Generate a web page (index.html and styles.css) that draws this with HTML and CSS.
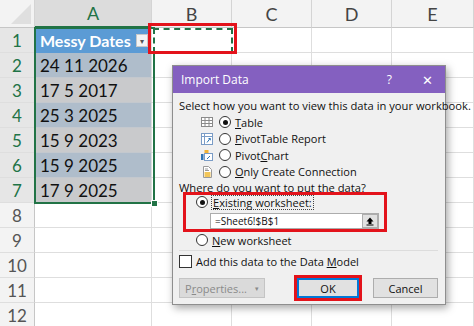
FILE: index.html
```html
<!DOCTYPE html>
<html lang="en">
<head>
    <meta charset="UTF-8">
    <meta name="viewport" content="width=device-width, initial-scale=1.0">
    <title>Import Data</title>
    <link rel="stylesheet" href="styles.css">
</head>
<body>
    <div class="sheet">
        <div class="grid">
            <div class="hd corner"></div>
            <div class="hd col active">A</div>
            <div class="hd col">B</div>
            <div class="hd col">C</div>
            <div class="hd col">D</div>
            <div class="hd col">E</div>

            <div class="rn active">1</div>
            <div class="cell th">Messy Dates<span class="dd">&#9662;</span></div>
            <div class="cell"></div><div class="cell"></div><div class="cell"></div><div class="cell"></div>

            <div class="rn active">2</div>
            <div class="cell band1">24 11 2026</div>
            <div class="cell"></div><div class="cell"></div><div class="cell"></div><div class="cell"></div>

            <div class="rn active">3</div>
            <div class="cell band2">17 5 2017</div>
            <div class="cell"></div><div class="cell"></div><div class="cell"></div><div class="cell"></div>

            <div class="rn active">4</div>
            <div class="cell band1">25 3 2025</div>
            <div class="cell"></div><div class="cell"></div><div class="cell"></div><div class="cell"></div>

            <div class="rn active">5</div>
            <div class="cell band2">15 9 2023</div>
            <div class="cell"></div><div class="cell"></div><div class="cell"></div><div class="cell"></div>

            <div class="rn active">6</div>
            <div class="cell band1">15 9 2025</div>
            <div class="cell"></div><div class="cell"></div><div class="cell"></div><div class="cell"></div>

            <div class="rn active">7</div>
            <div class="cell band2">17 9 2025</div>
            <div class="cell"></div><div class="cell"></div><div class="cell"></div><div class="cell"></div>

            <div class="rn">8</div>
            <div class="cell"></div><div class="cell"></div><div class="cell"></div><div class="cell"></div><div class="cell"></div>
            <div class="rn">9</div>
            <div class="cell"></div><div class="cell"></div><div class="cell"></div><div class="cell"></div><div class="cell"></div>
            <div class="rn">10</div>
            <div class="cell"></div><div class="cell"></div><div class="cell"></div><div class="cell"></div><div class="cell"></div>
            <div class="rn">11</div>
            <div class="cell"></div><div class="cell"></div><div class="cell"></div><div class="cell"></div><div class="cell"></div>
            <div class="rn">12</div>
            <div class="cell"></div><div class="cell"></div><div class="cell"></div><div class="cell"></div><div class="cell"></div>
        </div>

        <!-- selection, marquee and annotation boxes sit over the grid -->
        <div class="selection"><span class="handle"></span></div>
        <div class="marquee"></div>
        <div class="mark mark-b1"></div>

        <div class="dialog">
            <div class="titlebar">
                <span class="title">Import Data</span>
                <span class="help">?</span>
                <span class="close">&#10005;</span>
            </div>
            <div class="body">
                <p class="prompt">Select how you want to view this data in your workbook.</p>
                <div class="options">
                    <div class="opt">
                        <svg class="ico" viewBox="0 0 12 12"><rect x="0.5" y="1.5" width="11" height="9" fill="#fff" stroke="#8a8a8a"/><path d="M0.5 4.5h11M0.5 7.5h11M4 1.5v9M8 1.5v9" stroke="#8a8a8a" fill="none"/></svg>
                        <span class="radio on"></span><span><u>T</u>able</span>
                    </div>
                    <div class="opt">
                        <svg class="ico" viewBox="0 0 12 12"><rect x="0.5" y="0.5" width="11" height="11" fill="#fff" stroke="#7a9cc6"/><path d="M0.5 3.5h11M3.5 0.5v11" stroke="#7a9cc6" fill="none"/><path d="M6 9.5l3-4M7.5 5.5h1.8v1.8" stroke="#2e75b6" fill="none"/></svg>
                        <span class="radio"></span><span><u>P</u>ivotTable Report</span>
                    </div>
                    <div class="opt">
                        <svg class="ico" viewBox="0 0 12 12"><rect x="0" y="5" width="2.5" height="6" fill="#2e75b6"/><rect x="3.5" y="1" width="4" height="3" fill="#f2b233"/><rect x="3.5" y="4.5" width="8" height="7" fill="#fff" stroke="#7a9cc6"/><path d="M6 10l3-3" stroke="#2e75b6" fill="none"/></svg>
                        <span class="radio"></span><span>Pivot<u>C</u>hart</span>
                    </div>
                    <div class="opt">
                        <svg class="ico" viewBox="0 0 12 12"><path d="M2.5 0.5h5l3 3v8h-8z" fill="#fff" stroke="#9a9a9a"/><rect x="3.5" y="6" width="6" height="5" fill="#f2c65a"/><path d="M4 3h3M4 4.5h4" stroke="#9a9a9a"/></svg>
                        <span class="radio"></span><span><u>O</u>nly Create Connection</span>
                    </div>
                </div>
                <p class="prompt where">Where do you want to put the data?</p>
                <div class="dest">
                    <div class="opt2">
                        <span class="radio on"></span><span class="focus"><u>E</u>xisting worksheet:</span>
                    </div>
                    <div class="refbox">
                        <span class="reftext">=Sheet6!$B$1</span>
                        <span class="refbtn">
                            <svg viewBox="0 0 10 10"><path d="M5 1.5L1.5 5.5h2v2.5h3V5.5h2z" fill="#000"/><rect x="1.5" y="8.5" width="7" height="1" fill="#000"/></svg>
                        </span>
                    </div>
                </div>
                <div class="opt2 neww">
                    <span class="radio"></span><span><u>N</u>ew worksheet</span>
                </div>
                <div class="sep"></div>
                <div class="check">
                    <span class="box"></span><span>Add this data to the Data <u>M</u>odel</span>
                </div>
                <div class="buttons">
                    <span class="btn props">P<u>r</u>operties...<span class="caret">&#9662;</span></span>
                    <span class="spacer"></span>
                    <span class="btn ok">OK</span>
                    <span class="btn cancel">Cancel</span>
                </div>
            </div>
        </div>
    </div>
</body>
</html>
```

FILE: styles.css
```css
body {
    margin: 0;
    background: #fff;
    overflow: hidden;
}
.sheet {
    position: relative;
    width: 474px;
    height: 326px;
    overflow: hidden;
}
.grid {
    display: grid;
    grid-template-columns: 35px 117px 80px 80px 80px 82px;
    grid-template-rows: 28px repeat(12, 25px);
    font-family: Lato, "Liberation Sans", sans-serif;
}
.hd {
    background: #f3f3f3;
    border-right: 1px solid #d4d4d4;
    border-bottom: 1px solid #c6c6c6;
    color: #444;
    font-size: 18px;
    display: flex;
    align-items: center;
    justify-content: center;
}
.hd.active {
    background: #dcdcdc;
    color: #217346;
    border-bottom: 2px solid #217346;
}
.corner {
    background: #f3f3f3;
    position: relative;
}
.corner::after {
    content: "";
    position: absolute;
    right: 3px;
    bottom: 3px;
    border-left: 20px solid transparent;
    border-bottom: 20px solid #dfdfdf;
}
.rn {
    background: #f3f3f3;
    border-right: 1px solid #c6c6c6;
    border-bottom: 1px solid #dedede;
    color: #555;
    font-size: 17px;
    display: flex;
    align-items: center;
    justify-content: center;
}
.rn.active {
    color: #217346;
    background: #e6e6e6;
}
.cell {
    border-right: 1px solid #dedede;
    border-bottom: 1px solid #dedede;
    font-size: 17px;
    display: flex;
    align-items: center;
    padding-left: 5px;
    color: #111;
}
.th {
    background: #5b9bd5;
    color: #fff;
    font-weight: bold;
    font-size: 16px;
    border-bottom-color: #5b9bd5;
    position: relative;
}
.dd {
    position: absolute;
    right: 3px;
    top: 6px;
    width: 12px;
    height: 13px;
    box-sizing: border-box;
    background: #f4f4f4;
    border: 1px solid #c8c8c8;
    color: #555;
    font-size: 8px;
    font-weight: normal;
    display: flex;
    align-items: center;
    justify-content: center;
}
.band1 {
    background: #afbdcb;
    border-bottom-color: #c3c8ce;
}
.band2 {
    background: #c9cacc;
    border-bottom-color: #c3c8ce;
}
.selection {
    position: absolute;
    left: 34px;
    top: 27px;
    width: 117px;
    height: 173px;
    border: 2px solid #217346;
}
.handle {
    position: absolute;
    right: -5px;
    bottom: -5px;
    width: 5px;
    height: 5px;
    background: #217346;
    border: 1px solid #fff;
}
.marquee {
    position: absolute;
    left: 153px;
    top: 28px;
    width: 76px;
    height: 21px;
    border: 2px dashed #217346;
    background: #fff;
}
.mark {
    position: absolute;
    border: 3px solid #e3131b;
}
.mark-b1 {
    left: 148px;
    top: 23px;
    width: 83px;
    height: 25px;
}

/* dialog */
.dialog {
    position: absolute;
    left: 172px;
    top: 65px;
    width: 272px;
    height: 238px;
    background: #f0f0f0;
    border: 1px solid #8e8e8e;
    box-shadow: 2px 3px 8px rgba(0, 0, 0, 0.35);
    font-family: "Open Sans", "Noto Sans", sans-serif;
    font-size: 11px;
    color: #111;
}
.titlebar {
    height: 27px;
    background: #8460c0;
    color: #fff;
    display: flex;
    align-items: center;
    padding: 0 12px 0 8px;
}
.title {
    flex: 1;
    font-size: 12px;
}
.help {
    font-size: 12px;
    margin-right: 30px;
}
.close {
    font-size: 13px;
}
.body {
    padding: 5px 7px 0 6px;
}
.prompt {
    margin: 0;
    height: 16px;
    line-height: 16px;
    white-space: nowrap;
    font-size: 11.2px;
}
.options {
    padding-left: 22px;
}
.opt {
    display: flex;
    align-items: center;
    height: 16.5px;
}
.ico {
    width: 12px;
    height: 12px;
    margin-right: 6px;
}
.radio {
    width: 10px;
    height: 10px;
    border: 1px solid #333;
    border-radius: 50%;
    background: #fff;
    margin-right: 4px;
    position: relative;
    flex: none;
}
.radio.on::after {
    content: "";
    position: absolute;
    left: 2.5px;
    top: 2.5px;
    width: 5px;
    height: 5px;
    border-radius: 50%;
    background: #111;
}
.dest {
    border: 3px solid #e3131b;
    margin: -4px 0 0 4px;
    width: 188px;
    padding: 0 0 0 10px;
    position: relative;
}
.opt2 {
    display: flex;
    align-items: center;
    height: 14px;
}
.focus {
    outline: 1px dotted #444;
    padding: 0 1px;
    line-height: 13px;
}
.refbox {
    margin: 4px 0 0 14px;
    height: 16px;
    width: 169px;
    box-sizing: border-box;
    background: #fff;
    border: 1px solid #acacac;
    display: flex;
    align-items: center;
    font-size: 10px;
}
.reftext {
    flex: 1;
    padding-left: 4px;
}
.refbtn {
    width: 16px;
    height: 14px;
    box-sizing: border-box;
    background: #e1e1e1;
    border: 1px solid #adadad;
    display: flex;
    align-items: center;
    justify-content: center;
}
.refbtn svg {
    width: 10px;
    height: 10px;
}
.neww {
    padding-left: 17px;
    margin-top: 1px;
}
.sep {
    height: 1px;
    background: #dcdcdc;
    margin: 3px 0 4px 0;
}
.check {
    display: flex;
    align-items: center;
    height: 12px;
}
.box {
    width: 11px;
    height: 11px;
    border: 1px solid #333;
    background: #fff;
    margin-right: 4px;
}
.buttons {
    display: flex;
    margin-top: 11px;
    align-items: center;
}
.btn {
    width: 65px;
    height: 20px;
    background: #e1e1e1;
    border: 1px solid #adadad;
    display: flex;
    align-items: center;
    justify-content: center;
    box-sizing: border-box;
}
.props {
    width: 86px;
    color: #8a8a8a;
    background: #dadada;
    border-color: #c4c4c4;
}
.caret {
    font-size: 7px;
    margin-left: 8px;
}
.spacer {
    flex: 1;
}
.ok {
    width: 62px;
    margin-right: 14px;
    border: 1px solid #0078d7;
    box-shadow: inset 0 0 0 1px #0078d7;
    outline: 3px solid #e3131b;
}
```
